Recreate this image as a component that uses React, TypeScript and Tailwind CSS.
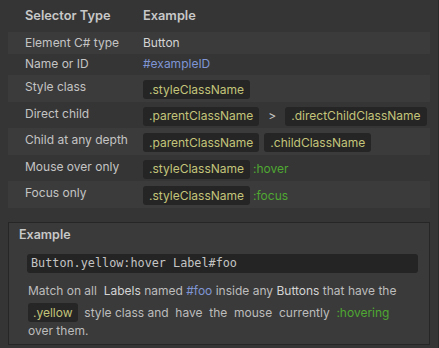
import React from 'react';

const Chip: React.FC<{ children: React.ReactNode }> = ({ children }) => (
  <span className="inline-flex items-center h-[19px] px-[6px] rounded-[3px] bg-[#252525] text-[#c3c47a]">{children}</span>
);

interface Row {
  label: string;
  value: React.ReactNode;
  tall?: boolean;
}

const rows: Row[] = [
  { label: 'Element C# type', value: <span className="text-[#d4d4d4]">Button</span> },
  { label: 'Name or ID', value: <span className="text-[#7f95d4]">#exampleID</span> },
  { label: 'Style class', value: <Chip>.styleClassName</Chip>, tall: true },
  {
    label: 'Direct child',
    value: (
      <div className="flex items-center">
        <Chip>.parentClassName</Chip>
        <span className="mx-[9px] text-[#c4c4c4]">&gt;</span>
        <Chip>.directChildClassName</Chip>
      </div>
    ),
    tall: true,
  },
  {
    label: 'Child at any depth',
    value: (
      <div className="flex items-center gap-[5px]">
        <Chip>.parentClassName</Chip>
        <Chip>.childClassName</Chip>
      </div>
    ),
    tall: true,
  },
  {
    label: 'Mouse over only',
    value: (
      <div className="flex items-center">
        <Chip>.styleClassName</Chip>
        <span className="ml-[3px] text-[#4fa832]">:hover</span>
      </div>
    ),
    tall: true,
  },
  {
    label: 'Focus only',
    value: (
      <div className="flex items-center">
        <Chip>.styleClassName</Chip>
        <span className="ml-[3px] text-[#4fa832]">:focus</span>
      </div>
    ),
    tall: true,
  },
];

export default function App() {
  return (
    <div className="w-[439px] h-[348px] bg-[#353535] text-[#c4c4c4] text-[12px] overflow-hidden border-r border-[#2a2a2a]" style={{ fontFamily: 'Inter, "Noto Sans", sans-serif' }}>
      <div className="px-2">
        <div className="flex items-center h-[32px] font-semibold text-[12.8px] text-[#c8c8c8]">
          <div className="w-[135px] pl-[17px]">Selector Type</div>
          <div>Example</div>
        </div>
        {rows.map((r, i) => (
          <div key={r.label} className={`flex ${r.tall ? 'h-[26.6px] items-start pt-[3px]' : 'h-[21.5px] items-center'} ${i % 2 === 0 ? 'bg-[#3b3b3b]' : ''}`}>
            <div className={`w-[135px] pl-[17px] shrink-0 text-[#c4c4c4] ${r.tall ? 'leading-[17px]' : ''}`}>{r.label}</div>
            <div className={r.tall ? 'pt-[2px]' : ''}>{r.value}</div>
          </div>
        ))}
      </div>
      <div className="mx-2 mt-[14px] border border-[#262626] bg-[#3a3a3a] px-[10px] pt-[3px] pb-[6px]">
        <div className="font-semibold text-[12.5px] text-[#c8c8c8] leading-[17px]">Example</div>
        <div className="mt-[11px] ml-[8px] mr-[1px] h-[19px] flex items-center rounded-[3px] bg-[#242424] px-[4px] text-[11.8px] text-[#c4c4c4]" style={{ fontFamily: '"DejaVu Sans Mono", monospace' }}>
          Button.yellow:hover Label#foo
        </div>
        <div className="mt-[9px] ml-[9px] text-[#bdbdbd]">
          <div className="leading-[18px] whitespace-nowrap">
            Match on all&nbsp; <span className="text-[#d4d4d4]">Labels</span> named <span className="text-[#7f95d4]">#foo</span> inside any <span className="text-[#d4d4d4]">Buttons</span> that have the
          </div>
          <div className="mt-[3px] h-[20px] flex items-center whitespace-pre">
            <span className="inline-flex items-center h-[19px] px-[5px] rounded-[3px] bg-[#262626] text-[#c3c47a]">.yellow</span>
            <span>  style class and  have  the  mouse  currently  </span>
            <span className="text-[#4fa832]">:hovering</span>
          </div>
          <div className="leading-[15px]">over them.</div>
        </div>
      </div>
    </div>
  );
}
